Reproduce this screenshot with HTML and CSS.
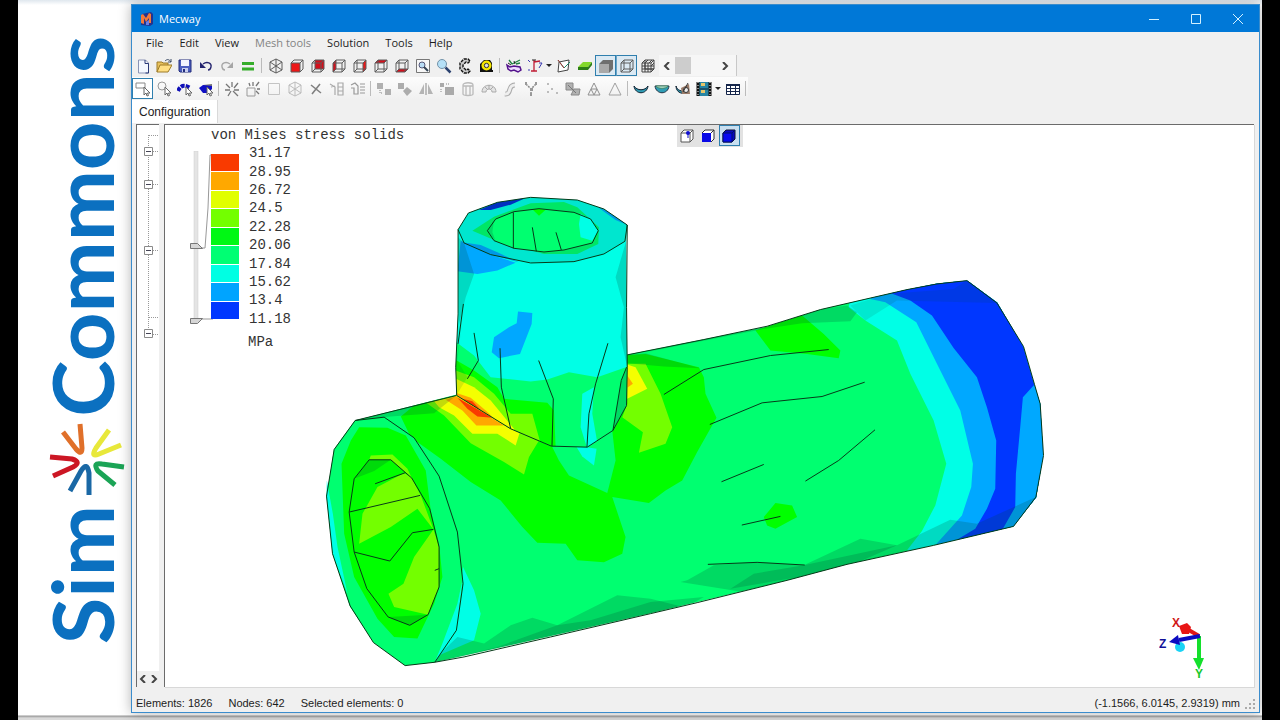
FILE: index.html
```html
<!DOCTYPE html>
<html lang="en">
<head>
<meta charset="utf-8">
<title>Mecway</title>
<link rel="stylesheet" href="styles.css">
</head>
<body>
<svg class="defs" aria-hidden="true">
  <symbol id="new" viewBox="0 0 16 16"><path d="M3.500 2h7l3 3v10h-10z" fill="#f4f8ff" stroke="#8a93b5"/><path d="M10 2v3.500h3.500v9.500h-3" fill="none" stroke="#2b3a78"/></symbol>
  <symbol id="open" viewBox="0 0 16 16"><path d="M1 14V4h5l1 1h5v3" fill="#e9c25c" stroke="#9c7a28"/><path d="M1 14l3-7h12l-4 7z" fill="#ffdf83" stroke="#9c7a28"/><path d="M9 3c2-2 4-2 6 1m0-3v3h-3" fill="none" stroke="#3c4c66"/></symbol>
  <symbol id="save" viewBox="0 0 16 16"><path d="M2 2h12v12H3l-1-1z" fill="#4c5fc0" stroke="#222c7c"/><path d="M4 2h8v6H4z" fill="#f2f5ff"/><path d="M5 10h6v4H5z" fill="#c8cff0"/><path d="M6 11h2v3H6z" fill="#222c7c"/></symbol>
  <symbol id="undo" viewBox="0 0 16 16"><path d="M5 6c4-3 9-1 8 3-.4 2-2 3-3 3" fill="none" stroke="#23236e" stroke-width="1.300"/><path d="M2 4v6h6z" fill="#23236e"/></symbol>
  <symbol id="redo" viewBox="0 0 16 16"><path d="M11 6C7 3 2 5 3 9c.4 2 2 3 3 3" fill="none" stroke="#a6a6a6" stroke-width="1.300"/><path d="M14 4v6H8z" fill="#a6a6a6"/></symbol>
  <symbol id="solve" viewBox="0 0 16 16"><path d="M2 4h12v3H2zM2 9.500h12v3H2z" fill="#35ad2a"/></symbol>
  <symbol id="iso" viewBox="0 0 16 16"><path d="M8 1l6 3v8l-6 3-6-3V4zM8 1v14M2 4l12 8M14 4L2 12" fill="none" stroke="currentColor"/></symbol>
  <symbol id="wire" viewBox="0 0 16 16"><path d="M2 5h9v9H2zM2 5l3-3h9v9l-3 3M11 5l3-3M5 2v9h9M5 11l-3 3" fill="none" stroke="currentColor"/></symbol>
  <symbol id="front" viewBox="0 0 16 16"><path d="M2 5h9v9H2z" fill="#ed1717"/><path d="M2 5l3-3h9v9l-3 3H2V5h9v9M11 5l3-3" fill="none" stroke="currentColor"/></symbol>
  <symbol id="back" viewBox="0 0 16 16"><path d="M5 2h9v9H5z" fill="#d5101c"/><use href="#wire"/></symbol>
  <symbol id="left" viewBox="0 0 16 16"><path d="M2 5l3-3v9l-3 3z" fill="#d5101c"/><use href="#wire"/></symbol>
  <symbol id="right" viewBox="0 0 16 16"><path d="M11 5l3-3v9l-3 3z" fill="#ed1717"/><use href="#wire"/></symbol>
  <symbol id="top" viewBox="0 0 16 16"><path d="M2 5l3-3h9l-3 3z" fill="#d5101c"/><use href="#wire"/></symbol>
  <symbol id="bottom" viewBox="0 0 16 16"><path d="M2 14l3-3h9l-3 3z" fill="#d5101c"/><use href="#wire"/></symbol>
  <symbol id="fit" viewBox="0 0 16 16"><path d="M1.500 1.500h13v13h-13z" fill="#f7f7f7" stroke="#777"/><circle cx="7" cy="7" r="3" fill="#b9ddf5" stroke="#557"/><path d="M9 9l4 4" stroke="#345" stroke-width="2"/></symbol>
  <symbol id="zoom" viewBox="0 0 16 16"><circle cx="6" cy="6" r="4.500" fill="#b5e0f7" stroke="#7392a8"/><path d="M9.500 9.500l5 5" stroke="#2b4270" stroke-width="2.500"/></symbol>
  <symbol id="clamp" viewBox="0 0 16 16"><path d="M13 3l-2-2H7L3 5v6l4 4h4l2-2-2-2-2 1-3-3V7l3-3 2 1z" fill="#c9c9c9" stroke="#111" stroke-width="1.400" stroke-dasharray="3 1"/></symbol>
  <symbol id="tape" viewBox="0 0 16 16"><path d="M2 13V6l4-4h6l2 3v7h1v2H2z" fill="#111"/><circle cx="8.500" cy="7.500" r="5" fill="#f6e600"/><circle cx="8.500" cy="7.500" r="2.200" fill="#ddd" stroke="#333"/></symbol>
  <symbol id="loads" viewBox="0 0 16 16"><path d="M1 7l3 2 4-1 6 1 1 3-3 2-4-2-3 1-3-2z" fill="#eedcff" stroke="#53118c" stroke-width="1.500"/><path d="M3 2l3 4M6 6l8-4M10 6l4-1" stroke="#1d8240" stroke-width="1.300"/><path d="M2 5l3 2M8 3l1 3" stroke="#222"/></symbol>
  <symbol id="dims" viewBox="0 0 16 16"><path d="M7 2v11M4 13h6M7 4l6-1" stroke="#c01b33" stroke-width="1.300"/><path d="M1 2l2 2m-2 8h2M12 5h3l-3 5" fill="none" stroke="#3a3ab0"/><path d="M5 2h4" stroke="#222"/></symbol>
  <symbol id="plane" viewBox="0 0 16 16"><path d="M3 4l10-2-1 10-10 2z" fill="#fff" stroke="#444"/><path d="M2 2l6 8 6-6" fill="none" stroke="#1a8a6a"/><path d="M2 2l6 8" stroke="#a33"/></symbol>
  <symbol id="slab" viewBox="0 0 16 16"><path d="M1 9l5-5h9l-4 5z" fill="#84d82c"/><path d="M1 9h10l4-5v3l-4 5H1z" fill="#2c7d17"/></symbol>
  <symbol id="shade" viewBox="0 0 16 16"><path d="M1 6l4-4h10v9l-4 4z" fill="#6f6f6f"/><path d="M1 6h10v9H1z" fill="#a9a9a9"/></symbol>
  <symbol id="mesh" viewBox="0 0 16 16"><path d="M2 5h9v9H2zM2 5l3-3h9v9l-3 3M11 5l3-3M5 5v9M8 5v9M2 8h12M2 11h12M8 2L5 5M12 2L9 5M14 5l-3 3M5 2v9h9" fill="none" stroke="#444"/></symbol>
  <symbol id="cursor" viewBox="0 0 16 16"><path d="M9 6v8l2-2 1 3 1.500-.5L12.500 12H15z" fill="#fff" stroke="#666"/></symbol>
  <symbol id="selrect" viewBox="0 0 16 16"><path d="M1 2h9v5H1z" fill="#fff" stroke="#888"/><use href="#cursor"/></symbol>
  <symbol id="selcirc" viewBox="0 0 16 16"><circle cx="6" cy="5" r="4" fill="none" stroke="#999"/><use href="#cursor"/></symbol>
  <symbol id="selarc" viewBox="0 0 16 16"><path d="M1 10c2-5 6-7 12-3" fill="none" stroke="#1010b8" stroke-width="4" stroke-dasharray="4 1"/><use href="#cursor"/></symbol>
  <symbol id="selvol" viewBox="0 0 16 16"><path d="M1 7l4-3h9v4l-4 4H5z" fill="#1010c4"/><path d="M5 4l9-1v2z" fill="#777"/><use href="#cursor"/></symbol>
  <symbol id="burst" viewBox="0 0 16 16"><path d="M8 6V1M10 7l4-5M10 9h5M9 10l5 5M7 10l-3 5M6 9H1M6 7L2 3" stroke="#777" stroke-width="1.300"/></symbol>
  <symbol id="boxburst" viewBox="0 0 16 16"><path d="M2 7h8v8H2z" fill="none" stroke="#999"/><path d="M8 5V1M11 5l3-4M12 8h3M11 10l3 3M5 5L4 2" stroke="#777" stroke-width="1.300"/></symbol>
  <symbol id="square" viewBox="0 0 16 16"><path d="M2.500 2.500h11v11h-11z" fill="none" stroke="#c4c4c4"/></symbol>
  <symbol id="cross" viewBox="0 0 16 16"><path d="M3 4l10 8M12 3l-8 10" stroke="#808080" stroke-width="1.600"/></symbol>
  <symbol id="split" viewBox="0 0 16 16"><path d="M1 3l5 3v8M2 6l4-1M9 2h5v12H9zM9 6h5M9 10h5" fill="none" stroke="#aaa" stroke-width="1.200"/></symbol>
  <symbol id="merge" viewBox="0 0 16 16"><path d="M1 4l4-2 3 3v8H4V7H1M10 3h5M10 6h5M10 9h5M10 12h5" fill="none" stroke="#999" stroke-width="1.200"/></symbol>
  <symbol id="move" viewBox="0 0 16 16"><path d="M1 2h6v6H1zM9 8h6v6H9z" fill="#b0b0b0"/><path d="M4 9v3h3" fill="none" stroke="#888" stroke-dasharray="1 1"/></symbol>
  <symbol id="rotate" viewBox="0 0 16 16"><path d="M1 2h6v6H1zM10 6l5 4-5 5-4-5z" fill="#acacac"/></symbol>
  <symbol id="mirror" viewBox="0 0 16 16"><path d="M6 3v10H1zM10 3v10h5z" fill="#b4b4b4"/><path d="M8 2v12" stroke="#888"/></symbol>
  <symbol id="scale" viewBox="0 0 16 16"><path d="M1 2h4v4H1zM6 6h9v8H6z" fill="#aaa"/><path d="M7 3h3M2 8v3" stroke="#888" stroke-dasharray="1 1"/></symbol>
  <symbol id="hollow" viewBox="0 0 16 16"><path d="M3 4c0-3 10-3 10 0v9c0 2-10 2-10 0zM3 5h10M6 5v9M10 5v9" fill="none" stroke="#bbb" stroke-width="1.300"/></symbol>
  <symbol id="revolve" viewBox="0 0 16 16"><path d="M1 11c0-9 14-9 14 0h-4c0-4-6-4-6 0zM4 6l3 3M12 6L9 9M8 4v4" fill="#e4e4e4" stroke="#aaa"/></symbol>
  <symbol id="sweep" viewBox="0 0 16 16"><path d="M3 13c7 1 2-9 10-9" fill="none" stroke="#aaa" stroke-width="5"/><path d="M3 13c7 1 2-9 10-9" fill="none" stroke="#eee" stroke-width="3"/></symbol>
  <symbol id="branch" viewBox="0 0 16 16"><path d="M3 3l5 5 5-5M8 8v6" fill="none" stroke="#888" stroke-width="1.500" stroke-dasharray="2 1"/><path d="M2 1h2v3H2zM12 1h2v3h-2zM7 7h3v3H7zM7 12h2v3H7z" fill="#999"/></symbol>
  <symbol id="dots" viewBox="0 0 16 16"><path d="M3 2h2v2H3zM7 7h2v2H7zM12 11h2v2h-2zM3 10h2v2H3z" fill="#bcbcbc"/></symbol>
  <symbol id="convert" viewBox="0 0 16 16"><path d="M1 2h7v7H1zM9 8h6l-1 6H6z" fill="#b2b2b2" stroke="#888"/><path d="M3 4l8 8" stroke="#777"/></symbol>
  <symbol id="refine" viewBox="0 0 16 16"><path d="M8 2l6 12H2zM5 8h6l-3 6z" fill="none" stroke="#909090"/></symbol>
  <symbol id="tri" viewBox="0 0 16 16"><path d="M8 2l6 12H2z" fill="none" stroke="#a0a0a0"/></symbol>
  <symbol id="bowl" viewBox="0 0 16 16"><path d="M1 5c3 5 11 5 14 0-1 9-13 9-14 0z" fill="#2f9db5" stroke="#123"/></symbol>
  <symbol id="bowl2" viewBox="0 0 16 16"><path d="M1 5h14c-1 9-13 9-14 0z" fill="#2f9db5" stroke="#234"/><path d="M2 5h12c-1 3-11 3-12 0z" fill="#c6eadc" stroke="#486"/></symbol>
  <symbol id="eye" viewBox="0 0 16 16"><path d="M1 5c1 4 5 6 12 5-3 4-12 3-12-5z" fill="#2f9db5" stroke="#123"/><path d="M6 7l8-4 1 10H7z" fill="#9b7b68"/><circle cx="11" cy="9" r="2.500" fill="#eee" stroke="#333"/><path d="M13 2l-5 9" stroke="#333"/></symbol>
  <symbol id="film" viewBox="0 0 16 16"><path d="M1 1h14v14H1z" fill="#2684a3"/><path d="M2 1v14M14 1v14" stroke="#111" stroke-width="3"/><path d="M2 1v14M14 1v14" stroke="#fff" stroke-dasharray="1 2"/><path d="M5 2h4v3H5zM5 9h4v3H5z" fill="#e4c56a"/><path d="M4 8h8" stroke="#123"/></symbol>
  <symbol id="table" viewBox="0 0 16 16"><path d="M1.500 3.500h13v10h-13z" fill="#fff" stroke="#15254a"/><path d="M1 4h14" stroke="#15254a" stroke-width="2"/><path d="M2 7.500h12M2 10.500h12M5.500 4v10M10.500 4v10" stroke="#15254a"/></symbol>
  <symbol id="node" viewBox="0 0 16 16"><path d="M2 5h9v9H2zM2 5l3-3h9v9l-3 3M11 5l3-3" fill="#fff" stroke="#555"/><path d="M9 5v5" stroke="#1010c4"/><circle cx="9" cy="5" r="2" fill="#1010d0"/></symbol>
  <symbol id="face" viewBox="0 0 16 16"><path d="M2 5l3-3h9v9l-3 3z" fill="#fff" stroke="#333"/><path d="M11 5l3-3" stroke="#333"/><path d="M2 5h9v9H2z" fill="#0808e6"/></symbol>
  <symbol id="solid" viewBox="0 0 16 16"><path d="M2 5l3-3h9v9l-3 3H2z" fill="#0808c0" stroke="#113"/><path d="M2 5h9v9H2zM11 5l3-3" fill="#0808f0" stroke="#001068"/></symbol>
</svg>

<div class="stage">
  <aside class="brand" aria-label="Sim Commons">
    <span class="word">Commons</span>
    <svg class="spark" viewBox="0 0 76 76" aria-hidden="true">
      <g fill="none" stroke-width="5">
        <path d="M14 11L27 28Q33 35 33 27L31 3" stroke="#e0702a"/>
        <path d="M60 9L47 27Q41 37 50 33L72 24" stroke="#e8e83a"/>
        <path d="M1 36L23 38Q33 41 24 46L4 55" stroke="#cc1724"/>
        <path d="M75 46L53 43Q43 41 49 50L66 64" stroke="#1ba456"/>
        <path d="M21 70L32 50Q38 40 40 52V74" stroke="#1a68a5"/>
      </g>
    </svg>
    <span class="word">Sim</span>
  </aside>

  <main class="window">
    <header class="titlebar">
      <svg class="logo" viewBox="0 0 14 14" aria-hidden="true"><path d="M2 2l9-2 2 2v10l-3 2-9-1z" fill="#23348f"/><path d="M1 11V3l2-1 3 4 3-5 2 1v9H9V6l-3 4-2-4v6z" fill="#f2793a"/><path d="M6 10l3-2v5H6z" fill="#6a7fe8"/></svg>
      <h1 class="title">Mecway</h1>
      <button class="wctl" aria-label="Minimize"><svg viewBox="0 0 10 10"><path d="M0 5.500h10"/></svg></button>
      <button class="wctl" aria-label="Maximize"><svg viewBox="0 0 10 10"><path d="M.5.500h9v9h-9z"/></svg></button>
      <button class="wctl" aria-label="Close"><svg viewBox="0 0 10 10"><path d="M0 0l10 10M10 0L0 10"/></svg></button>
    </header>

    <nav class="menubar">
      <button>File</button><button>Edit</button><button>View</button><button disabled>Mesh tools</button><button>Solution</button><button>Tools</button><button>Help</button>
    </nav>

    <div class="toolbar main-tools" role="toolbar" aria-label="Main">
      <button aria-label="New"><svg><use href="#new"/></svg></button>
      <button aria-label="Open"><svg><use href="#open"/></svg></button>
      <button aria-label="Save"><svg><use href="#save"/></svg></button>
      <button aria-label="Undo"><svg><use href="#undo"/></svg></button>
      <button aria-label="Redo"><svg><use href="#redo"/></svg></button>
      <button aria-label="Solve"><svg><use href="#solve"/></svg></button>
      <span class="sep"></span>
      <button aria-label="Isometric"><svg><use href="#iso"/></svg></button>
      <button aria-label="Front"><svg><use href="#front"/></svg></button>
      <button aria-label="Back"><svg><use href="#back"/></svg></button>
      <button aria-label="Left"><svg><use href="#left"/></svg></button>
      <button aria-label="Right"><svg><use href="#right"/></svg></button>
      <button aria-label="Top"><svg><use href="#top"/></svg></button>
      <button aria-label="Bottom"><svg><use href="#bottom"/></svg></button>
      <button aria-label="Fit to window"><svg><use href="#fit"/></svg></button>
      <button aria-label="Zoom"><svg><use href="#zoom"/></svg></button>
      <button aria-label="Clamp"><svg><use href="#clamp"/></svg></button>
      <button aria-label="Tape measure"><svg><use href="#tape"/></svg></button>
      <span class="sep"></span>
      <button aria-label="Show loads"><svg><use href="#loads"/></svg></button>
      <button aria-label="Show dimensions"><svg><use href="#dims"/></svg></button>
      <button class="drop" aria-label="More dimensions"></button>
      <button aria-label="Cutting plane"><svg><use href="#plane"/></svg></button>
      <button aria-label="Shell thickness"><svg><use href="#slab"/></svg></button>
      <button class="on" aria-label="Shaded" aria-pressed="true"><svg><use href="#shade"/></svg></button>
      <button class="on" aria-label="Edges" aria-pressed="true"><svg><use href="#wire"/></svg></button>
      <button aria-label="Mesh lines"><svg><use href="#mesh"/></svg></button>
      <div class="scroller">
        <button aria-label="Previous"><svg viewBox="0 0 8 8"><path d="M6 0L2 4l4 4"/></svg></button>
        <span class="thumb"></span>
        <button aria-label="Next"><svg viewBox="0 0 8 8"><path d="M2 0l4 4-4 4"/></svg></button>
      </div>
    </div>

    <div class="toolbar mesh-tools" role="toolbar" aria-label="Mesh">
      <button class="on" aria-label="Select rectangle" aria-pressed="true"><svg><use href="#selrect"/></svg></button>
      <button aria-label="Select circle"><svg><use href="#selcirc"/></svg></button>
      <button aria-label="Select faces"><svg><use href="#selarc"/></svg></button>
      <button aria-label="Select volume"><svg><use href="#selvol"/></svg></button>
      <span class="sep"></span>
      <button aria-label="New node"><svg><use href="#burst"/></svg></button>
      <button aria-label="New element"><svg><use href="#boxburst"/></svg></button>
      <button aria-label="Square"><svg><use href="#square"/></svg></button>
      <button class="faint" aria-label="Box"><svg><use href="#iso"/></svg></button>
      <button aria-label="Delete"><svg><use href="#cross"/></svg></button>
      <button aria-label="Split"><svg><use href="#split"/></svg></button>
      <button aria-label="Merge"><svg><use href="#merge"/></svg></button>
      <span class="sep"></span>
      <button aria-label="Move"><svg><use href="#move"/></svg></button>
      <button aria-label="Rotate"><svg><use href="#rotate"/></svg></button>
      <button aria-label="Mirror"><svg><use href="#mirror"/></svg></button>
      <button aria-label="Scale"><svg><use href="#scale"/></svg></button>
      <button aria-label="Hollow"><svg><use href="#hollow"/></svg></button>
      <button aria-label="Revolve"><svg><use href="#revolve"/></svg></button>
      <button aria-label="Sweep"><svg><use href="#sweep"/></svg></button>
      <button aria-label="Branch"><svg><use href="#branch"/></svg></button>
      <button aria-label="Midside nodes"><svg><use href="#dots"/></svg></button>
      <button aria-label="Convert"><svg><use href="#convert"/></svg></button>
      <button aria-label="Refine"><svg><use href="#refine"/></svg></button>
      <button aria-label="Triangles"><svg><use href="#tri"/></svg></button>
      <span class="sep"></span>
      <button aria-label="Deformed"><svg><use href="#bowl"/></svg></button>
      <button aria-label="Undeformed"><svg><use href="#bowl2"/></svg></button>
      <button aria-label="Deformed view settings"><svg><use href="#eye"/></svg></button>
      <button aria-label="Animate"><svg><use href="#film"/></svg></button>
      <button class="drop" aria-label="Animation options"></button>
      <button aria-label="Table"><svg><use href="#table"/></svg></button>
      <span class="sep"></span>
    </div>

    <div class="tabs" role="tablist"><button class="tab" role="tab" aria-selected="true">Configuration</button></div>

    <section class="work">
      <div class="tree">
        <svg class="nodes" viewBox="0 0 21 220" aria-hidden="true">
          <path d="M11.500 10V209M12 10.500h9M12 26.500h9M12 59.500h9M12 125.500h9M12 192.500h9M12 209.500h9" stroke="#999" stroke-dasharray="1 1" fill="none"/>
          <g fill="#fff" stroke="#8a8a8a"><path d="M7.500 22.500h8v8h-8zM7.500 55.500h8v8h-8zM7.500 121.500h8v8h-8zM7.500 204.500h8v8h-8z"/></g>
          <path d="M9 26.500h5M9 59.500h5M9 125.500h5M9 208.500h5" stroke="#445"/>
        </svg>
        <div class="treescroll">
          <button aria-label="Scroll left"><svg viewBox="0 0 8 8"><path d="M6 0L2 4l4 4"/></svg></button>
          <button aria-label="Scroll right"><svg viewBox="0 0 8 8"><path d="M2 0l4 4-4 4"/></svg></button>
        </div>
      </div>

      <div class="viewport">
        <svg class="scene" viewBox="164 125 1090 561" role="img" aria-label="von Mises stress on a pipe tee">
          <clipPath id="pipe"><path d="M354 420L456 394 627 354 767 326 820 309 907 289 937 283 967 280 997 302 1023 346 1034 384 1040 403 1043 455 1036 497 1013 526 933 545 847 564 787 580 650 613 434 662 404 665 373 642 349 606 332 553 326 496 333 449z"/></clipPath>
          <g clip-path="url(#pipe)">
            <path class="c5" d="M320 270H1050V670H320z"/>
            <g transform="translate(620 260) scale(.3333333)">
              <path class="c6" d="M685 140L735 180 830 240 870 340 940 480 978 610 945 735 905 812 860 870 1300 870V40H700z"/>
              <path class="c7" d="M750 115L795 125 888 185 960 330 1020 450 1058 610 1053 680 1025 765 940 860H1300V40H800z"/>
              <path class="c8" d="M810 97L870 120 935 165 1000 262 1070 350 1100 440 1128 540 1125 685 1100 745 1065 805 990 850H1300V40H860z"/>
              <path class="c7" d="M1243 372L1208 410 1200 500 1187 640 1185 740 1145 810H1300V372z"/>
              <path class="c4" d="M405 210L460 190 545 165 610 220 660 270 655 293 560 280 450 270zM430 770L465 728 515 735 530 770 465 805 440 795z"/>
            </g>
            <g transform="translate(310 380) scale(.3333333)">
              <path class="c4" d="M270 108L310 75 437 45 700 0 950 -77 1005 -80 1165 -40 1180 -10 1185 40 1218 112 1160 215 1115 300 1065 330 1015 368 905 350 945 470 935 520 880 546 800 540 765 490 680 487 635 440 570 360 480 305 390 235 300 170z"/>
              <path class="c5" d="M720 190L745 240 775 285 890 338 915 240 905 150z"/>
              <path class="c6" d="M795 195L815 228 850 255 858 205z"/>
              <path class="c3" d="M345 66L437 45 600 95 667 98 685 180 655 230 640 282 580 245 480 188 400 105z"/>
              <path class="c2" d="M370 62L437 45 600 140 632 140 615 195 560 160 485 160 430 105 385 80z"/>
              <path class="c1" d="M405 58L437 47 580 135 497 135 455 90z"/>
              <path class="c0" d="M440 52L545 112 500 108 470 85z"/>
              <path class="c6" d="M457 560L490 630 510 700 490 780 385 825 372 846 437 750z"/>
              <path class="s1" d="M133 120L235 82 437 45 370 98 240 108z"/>
              <path class="s1" d="M340 866L440 770 520 790 600 735 665 712 740 735 920 645 1020 655 1110 678 1020 720z"/>
              <path class="s1" d="M372 846L560 800 740 735 840 720 1020 665 1180 650 1020 740 372 870z"/>
            </g>
            <g transform="translate(620 260) scale(.3333333)">
              <path class="c3" d="M20 310H75L120 400 155 500 135 550 55 577 67 515 5 470 20 430z"/>
              <path class="c2" d="M20 312L45 320 80 385 20 415z"/>
              <path class="c1" d="M20 345L37 370 20 382z"/>
              <path class="s1" d="M20 283L75 278 240 323 130 318 20 308zM75 275L250 232 440 197 545 160 600 147 680 135 710 155 690 182 545 188 430 205 200 250z"/>
              <path class="s2" d="M690 135L800 100 1000 85 1040 60 1130 127 830 120 735 180z"/>
              <path class="s1" d="M180 965L200 960 280 915 400 905 550 915 720 835 830 855 680 920 400 1000z"/>
              <path class="s1" d="M550 915L830 855 990 778 1070 790 1247 710 1180 810 680 925 330 985 400 940z"/>
            </g>
          </g>

          <g transform="translate(310 380) scale(.3333333)">
            <path class="c5" d="M133 120L220 110 310 172 385 287 440 455 457 610 437 750 372 846 283 856 188 787 118 677 65 520 47 347 70 207z"/>
            <path class="c6" d="M48 300L66 400 80 500 110 640 65 520 47 347zM457 590L440 670 395 790 372 846 437 750z"/>
            <path class="c4" d="M145 140L230 142 285 165 345 270 360 390 385 490 395 590 370 670 320 775 250 770 200 715 130 590 100 460 92 250 120 180z"/>
            <path class="c3" d="M180 225L245 222 290 265 303 293 240 238H175zM145 490L155 400 200 320 280 278 303 293 330 345 368 447 320 385 240 440zM368 447L385 500V620L352 703 250 680 233 640 278 610 310 530z"/>
            <path class="s1" d="M130 295L175 238H240L190 272zM232 710L352 703 297 735z"/>
            <path class="edge" d="M133 120L220 110 310 172 385 287 440 455 457 610 437 750 372 846 283 856 188 787 118 677 65 520 47 347 70 207zM175 238H240L303 293 357 385 385 500V620L352 703 297 735 232 710 168 625 130 515 115 395 130 295z"/>
            <path class="edge" d="M193 310L283 277M115 395L328 345M130 515L237 542 305 457 368 447M372 570L385 565"/>
            <path class="edge" d="M133 120L437 45M372 846L460 830 720 770 1020 700 1160 667"/>
          </g>

          <g transform="translate(430 180) scale(.3333333)">
            <clipPath id="stub"><path d="M82 147L113 97 200 65 300 50 440 58 520 85 590 133 587 180 588 380 590 560 588 675 547 750 470 800 362 797 240 745 78 645 75 560 82 400z"/></clipPath>
            <g clip-path="url(#stub)">
              <path class="c6" d="M60 30H610V810H60z"/>
              <path class="c7" d="M90 180L180 222 255 246 200 270 140 280 80 272zM262 393L305 397 303 430 268 520 205 533 183 515 190 470 235 440 258 428z"/>
              <path class="c5" d="M70 480L130 525 180 590 300 603 350 597 415 575 500 590 600 555V810H60z"/>
              <path class="c6" d="M455 640L490 620 485 700 500 785 470 805 450 740z"/>
              <path class="c4" d="M70 535L130 570 200 620 220 655 350 667 370 690 375 800H60z"/>
              <path class="c3" d="M70 568L130 590 190 640 240 700H305L330 790H60z"/>
              <path class="c2" d="M70 592L130 620 180 660 250 745V760H60z"/>
              <path class="c1" d="M70 635L120 652 165 690 205 728 190 740 70 660z"/>
              <path class="c0" d="M95 655L125 662 160 700z"/>
              <path class="s1" d="M82 170L100 187 130 280 105 350 85 430zM587 180L555 290 580 380 570 470 590 560zM588 560L572 600 547 750 590 675z"/>
              <path class="s2" d="M100 370L85 490 70 570 80 640 110 590 80 540z"/>
              <path fill="#00e6cf" d="M82 147L113 97 200 65 300 50 440 58 520 85 590 133 583 182 520 220 430 243 300 247 180 222 100 187z"/>
              <path fill="#0030c0" d="M145 88L200 65 285 52 240 72 180 88z"/>
              <path fill="#0098e6" d="M500 78L545 98 590 133 555 118 530 100zM95 185L150 193 200 215 265 245 180 222z"/>
              <path fill="#00e665" d="M125 150L190 108 300 68 400 64 440 80 505 140 503 190 440 220 340 220 190 178z"/>
            </g>
            <path class="c5" d="M170 150L195 115 250 93 325 84 430 95 480 115 503 150 485 187 400 208 340 214 250 203 190 180z"/>
            <path class="c6" d="M450 100L480 115 503 150 485 180 450 170 445 130z"/>
            <path class="c4" d="M305 86L325 84 345 87 325 105z"/>
            <path class="s1" d="M170 150L190 118 185 155 195 182z"/>
            <path class="edge" d="M170 150L195 115 250 93 325 84 430 95 480 115 503 150 485 187 400 208 340 214 250 203 190 180zM82 147L113 97 200 65 300 50 440 58 520 85 590 133 583 182 520 220 430 243 300 247 180 222 100 187zM82 147L82 400 75 560 78 645 240 745 362 797 470 800 547 750 588 675 590 560 588 380 590 133M98 370L82 490"/>
            <path class="edge" d="M248 95V203M305 140L317 212M376 155L392 208M130 457L143 540 110 595M208 503L212 620 240 745M324 540L368 655 364 797M532 488L495 610 475 700 469 800M588 560L572 600 547 750"/>
          </g>
          <g transform="translate(620 260) scale(.3333333)">
            <path class="edge" d="M20 283L250 237 440 197 600 147 860 87 950 70 1040 60 1130 127 1210 258 1243 372 1260 430 1270 585 1247 710 1180 798 940 855 680 912 500 960 230 1027"/>
            <path class="edge" d="M130 402L250 327 450 285 625 267M268 492L425 427 605 408 733 365M555 662L655 600 764 508M303 664L430 612M364 794L480 768M262 912L410 906 553 914"/>
          </g>
        </svg>

        <div class="legend">
          <p class="caption">von Mises stress solids</p>
          <div class="scale">
            <svg class="sliders" viewBox="0 0 24 178" aria-hidden="true">
              <path d="M4 0h4v170H4z" fill="#e4e4e4" stroke="#cfcfcf" stroke-width=".5"/>
              <path d="M12 97h3l3-40 2-53h3M12 168h11" fill="none" stroke="#999"/>
              <path d="M.5 92.500h7l5 5h-12zM.5 167.500h12l-5 5h-7z" fill="#d6d6d6" stroke="#777"/>
            </svg>
            <div class="bands"><i class="b0"></i><i class="b1"></i><i class="b2"></i><i class="b3"></i><i class="b4"></i><i class="b5"></i><i class="b6"></i><i class="b7"></i><i class="b8"></i></div>
            <ol class="values"><li>31.17</li><li>28.95</li><li>26.72</li><li>24.5</li><li>22.28</li><li>20.06</li><li>17.84</li><li>15.62</li><li>13.4</li><li>11.18</li></ol>
          </div>
          <p class="unit">MPa</p>
        </div>

        <div class="picker" role="toolbar" aria-label="Selection mode">
          <button aria-label="Nodes"><svg><use href="#node"/></svg></button>
          <button aria-label="Faces"><svg><use href="#face"/></svg></button>
          <button class="on" aria-label="Elements" aria-pressed="true"><svg><use href="#solid"/></svg></button>
        </div>

        <svg class="triad" viewBox="0 0 48 70" role="img" aria-label="Axes">
          <circle cx="21" cy="31" r="5" fill="#19d3f5"/>
          <path d="M40 20L28 13" stroke="#e01515" stroke-width="4"/><path d="M20 10l8-3 4 4-2 7-7 0z" fill="#e81515"/>
          <path d="M40 20v24" stroke="#14e02c" stroke-width="4"/><path d="M34 42h11l-5 12z" fill="#14e02c"/>
          <path d="M41 20L20 24" stroke="#0b0bc0" stroke-width="4"/><path d="M10 26l9-7 2 10z" fill="#0b0bc0"/>
          <text x="13" y="11" fill="#d01818">X</text><text x="0" y="32" fill="#101098">Z</text><text x="36" y="62" fill="#18c82c">Y</text>
        </svg>
      </div>
    </section>

    <footer class="status">
      <span>Elements: 1826</span><span>Nodes: 642</span><span>Selected elements: 0</span><span class="coords">(-1.1566, 6.0145, 2.9319) mm</span>
      <svg class="grip" viewBox="0 0 11 11" aria-hidden="true"><path d="M8 0h2v2H8zM4 4h2v2H4zM8 4h2v2H8zM0 8h2v2H0zM4 8h2v2H4zM8 8h2v2H8z" fill="#aaa"/></svg>
    </footer>
  </main>
</div>
</body>
</html>
```
FILE: styles.css
```css
* { box-sizing: border-box; }
body { margin: 0; background: #000; font: 12px "Liberation Sans", Arial, sans-serif; color: #1c1c1c; }
button { margin: 0; padding: 0; border: 0; background: none; font: inherit; color: inherit; display: flex; align-items: center; justify-content: center; }
p, h1, ol { margin: 0; padding: 0; font-weight: normal; }
.defs { position: absolute; width: 0; height: 0; }

.stage { display: flex; min-height: 100vh; margin: 0 18px; padding: 4px 2px 7px 0; background: linear-gradient(#dfe7ee, #fff 5px, #fff calc(100% - 5px), #999 calc(100% - 4px), #d9d9d9 calc(100% - 2px)); }

.brand { flex: 0 0 113px; display: flex; flex-direction: column; align-items: flex-end; padding: 32px 6px 0 0; color: #0b70c0; overflow: hidden; }
.word { writing-mode: vertical-rl; transform: rotate(180deg); font: bold 85px/88px Lato, sans-serif; }
.spark { width: 76px; height: 76px; margin: 4px 0 8px; }

.window { flex: 1; min-width: 0; display: flex; flex-direction: column; border: 1px solid #3a8ccc; background: #f0f0f0; box-shadow: 0 0 12px rgba(0, 0, 0, .3); }

.titlebar { display: flex; align-items: center; height: 27px; padding-left: 8px; background: #0078d7; color: #fff; }
.logo { width: 14px; height: 14px; margin-right: 5px; }
.title { flex: 1; font: 11px "Open Sans", sans-serif; }
.wctl { width: 42px; height: 27px; }
.wctl svg { width: 10px; height: 10px; fill: none; stroke: #d3f1ff; }

.menubar { display: flex; gap: 16px; height: 22px; padding: 0 14px 2px; font: 11px "Open Sans", sans-serif; }
.menubar button:disabled { color: #838383; }

.toolbar { display: flex; align-items: center; height: 23px; color: #5c5c5c; }
.toolbar button { width: 21px; height: 21px; }
.toolbar svg, .picker svg { width: 16px; height: 16px; }
.toolbar .on, .picker .on { border: 1px solid #2f7fae; background: #dbe9f3; }
.toolbar .on + .on { border-left-color: #6da4c6; }
.toolbar .faint { color: #bbb; }
.toolbar .drop { width: 8px; }
.drop::after { content: ""; border: 3px solid transparent; border-top-color: #222; border-bottom: 0; }
.sep { width: 7px; height: 15px; background: linear-gradient(#bbb, #bbb) center / 1px 100% no-repeat; }
.mesh-tools { background: linear-gradient(#fcfcfc, #f0f0f0); align-self: flex-start; }
.mesh-tools .sep { width: 5px; }
.mesh-tools .on { background: #fff; }
.scroller { display: flex; align-items: center; height: 21px; margin-left: 1px; padding-right: 3px; background: #f6f6f6; border-right: 1px solid #c8c8c8; }
.scroller .thumb { width: 16px; height: 17px; margin-right: 26px; background: #cdcdcd; }
.scroller button { width: 16px; }
.scroller svg, .treescroll svg { width: 8px; height: 8px; fill: none; stroke: #444; stroke-width: 2px; }

.tabs { display: flex; height: 23px; padding-right: 4px; }
.tab { padding: 0 7px; background: #fff; border-right: 1px solid #d9d9d9; }

.work { flex: 1; display: flex; gap: 5px; min-height: 0; padding: 1px 5px 0 4px; }
.tree { flex: 0 0 22px; display: flex; flex-direction: column; border: solid #6b6b6b; border-width: 1px 0 0 1px; background: #fff; }
.nodes { width: 21px; height: 220px; }
.treescroll { display: flex; height: 16px; margin-top: auto; background: #f0f0f0; }
.treescroll button { width: 11px; height: 16px; }

.viewport { flex: 1; min-width: 0; position: relative; border: solid #6b6b6b; border-width: 1px 0 0 1px; box-shadow: 1px 1px 0 #d8d8d8; background: #fff; }
.scene { position: absolute; inset: 0; width: 100%; height: 100%; }
.c0 { fill: #f93a00; } .c1 { fill: #ffa800; } .c2 { fill: #f4ff00; } .c3 { fill: #73ff00; } .c4 { fill: #00ff00; }
.c5 { fill: #00ff70; } .c6 { fill: #00ffe6; } .c7 { fill: #00a8ff; } .c8 { fill: #0037ff; }
.s1 { fill: #004830; fill-opacity: .2; } .s2 { fill: #004830; fill-opacity: .12; }
.edge { fill: none; stroke: #063a18; stroke-width: 1px; vector-effect: non-scaling-stroke; }

.legend { position: relative; width: 260px; padding: 2px 0 0 25px; font: 14px/16px "Liberation Mono", "Courier New", monospace; color: #333; }
.caption { padding-left: 21px; }
.scale { display: flex; }
.sliders { width: 24px; height: 178px; margin: 8px -3px 0 0; }
.bands { display: flex; flex-direction: column; gap: 1px; width: 28px; height: 165px; margin: 11px 10px 0 0; }
.bands i { flex: 1; }
.b0 { background: #f93a00; } .b1 { background: #ffa800; } .b2 { background: #e1ff00; } .b3 { background: #73ff00; } .b4 { background: #00f814; }
.b5 { background: #00ff73; } .b6 { background: #00ffe3; } .b7 { background: #00a4ff; } .b8 { background: #0037ff; }
.values { display: flex; flex-direction: column; height: 184px; margin-top: 1px; list-style: none; }
.values li { flex: 1; display: flex; align-items: center; }
.unit { padding: 5px 0 0 58px; }

.picker { position: absolute; top: 0; left: 50%; transform: translateX(-50%); display: flex; width: 66px; height: 22px; background: #e2e2e2; }
.picker button { width: 21px; height: 21px; }
.picker .on { background: #c9dff0; }

.triad { position: absolute; right: 47px; bottom: 1px; width: 48px; height: 70px; font: bold 12px "Liberation Sans", sans-serif; }

.status { display: flex; align-items: center; gap: 16px; height: 25px; padding: 6px 3px 0 4px; font-size: 11px; }
.coords { margin-left: auto; }
.grip { width: 11px; height: 11px; margin-left: -11px; align-self: flex-end; margin-bottom: 2px; }
```
